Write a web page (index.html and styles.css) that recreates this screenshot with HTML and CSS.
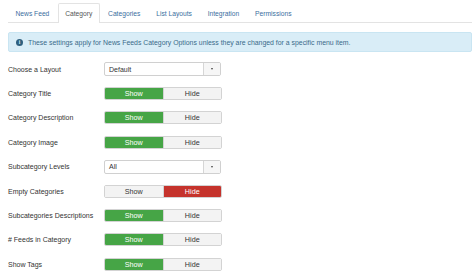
FILE: index.html
```html
<!DOCTYPE html>
<html>
<head>
<meta charset="utf-8">
<link rel="stylesheet" href="styles.css">
</head>
<body>
<div class="page">
  <ul class="tabs">
    <li class="tab"><span>News Feed</span></li>
    <li class="tab active"><span>Category</span></li>
    <li class="tab"><span>Categories</span></li>
    <li class="tab"><span>List Layouts</span></li>
    <li class="tab"><span>Integration</span></li>
    <li class="tab"><span>Permissions</span></li>
  </ul>
  <div class="alert">
    <span class="info-icon">i</span>
    <span>These settings apply for News Feeds Category Options unless they are changed for a specific menu item.</span>
  </div>
  <div class="form">
    <div class="row"><div class="label">Choose a Layout</div>
      <div class="select"><span class="val">Default</span><span class="arrow"><span class="caret"></span></span></div></div>
    <div class="row"><div class="label">Category Title</div>
      <div class="toggle"><span class="opt show on">Show</span><span class="opt">Hide</span></div></div>
    <div class="row"><div class="label">Category Description</div>
      <div class="toggle"><span class="opt show on">Show</span><span class="opt">Hide</span></div></div>
    <div class="row"><div class="label">Category Image</div>
      <div class="toggle"><span class="opt show on">Show</span><span class="opt">Hide</span></div></div>
    <div class="row"><div class="label">Subcategory Levels</div>
      <div class="select"><span class="val">All</span><span class="arrow"><span class="caret"></span></span></div></div>
    <div class="row"><div class="label">Empty Categories</div>
      <div class="toggle"><span class="opt">Show</span><span class="opt hide on">Hide</span></div></div>
    <div class="row"><div class="label">Subcategories Descriptions</div>
      <div class="toggle"><span class="opt show on">Show</span><span class="opt">Hide</span></div></div>
    <div class="row"><div class="label"># Feeds in Category</div>
      <div class="toggle"><span class="opt show on">Show</span><span class="opt">Hide</span></div></div>
    <div class="row"><div class="label">Show Tags</div>
      <div class="toggle"><span class="opt show on">Show</span><span class="opt">Hide</span></div></div>
  </div>
</div>
</body>
</html>
```
FILE: styles.css
```css
html, body { margin: 0; padding: 0; background: #fff; }
body { font-family: "Liberation Sans", Arial, sans-serif; font-size: 7px; color: #333; }
.page { padding: 3px 2px 0 8px; }
.tabs {
  list-style: none; margin: 0; padding: 0;
  display: flex; height: 19px;
  border-bottom: 1px solid #e3e3e3;
  font-size: 6.7px;
}
.tab {
  display: flex; align-items: center;
  padding: 0 6.5px; margin-right: 0.8px;
  color: #3b6e9e;
  border: 1px solid transparent; border-bottom: none;
  border-radius: 2px 2px 0 0;
}
.tab.active {
  color: #555; background: #fff;
  border-color: #e3e3e3;
  margin-bottom: -1px; height: 20px; box-sizing: border-box;
}
.alert {
  margin-top: 9px; height: 20px;
  background: #d9edf7; color: #3a6b8a;
  border: 1px solid #c9e5f2; border-radius: 2px;
  display: flex; align-items: center; box-sizing: border-box;
  padding-left: 7px; gap: 5px; font-size: 6.9px;
}
.info-icon {
  width: 7px; height: 7px; border-radius: 50%;
  background: #2e5f7e; color: #d9edf7;
  font-size: 5.5px; font-weight: bold; line-height: 7px; text-align: center;
  font-family: "Liberation Serif", serif;
}
.form { margin-top: 5px; }
.row { height: 24.4px; display: flex; align-items: center; }
.label { width: 96px; color: #333; }
.select {
  width: 117px; height: 14px; box-sizing: border-box;
  border: 1px solid #d0d0d0; border-radius: 2px;
  display: flex; align-items: center; background: #fff;
}
.select .val { flex: 1; padding-left: 4px; }
.select .arrow {
  width: 16px; height: 100%; border-left: 1px solid #d6d6d6;
  background: #f6f6f6; display: flex; align-items: center; justify-content: center;
}
.caret {
  width: 0; height: 0;
  border-left: 1.5px solid transparent; border-right: 1.5px solid transparent;
  border-top: 2px solid #444;
}
.toggle {
  width: 118px; height: 13px; display: flex; box-sizing: border-box;
  border-radius: 2px; overflow: hidden;
  border: 1px solid #d3d3d3;
}
.opt {
  flex: 1; display: flex; align-items: center; justify-content: center;
  background: #f3f3f3; color: #333; font-size: 7.2px;
}
.opt + .opt { border-left: 1px solid #d3d3d3; }
.opt.show.on { background: #46a546; color: #fff; }
.opt.hide.on { background: #c5332c; color: #fff; }
```
